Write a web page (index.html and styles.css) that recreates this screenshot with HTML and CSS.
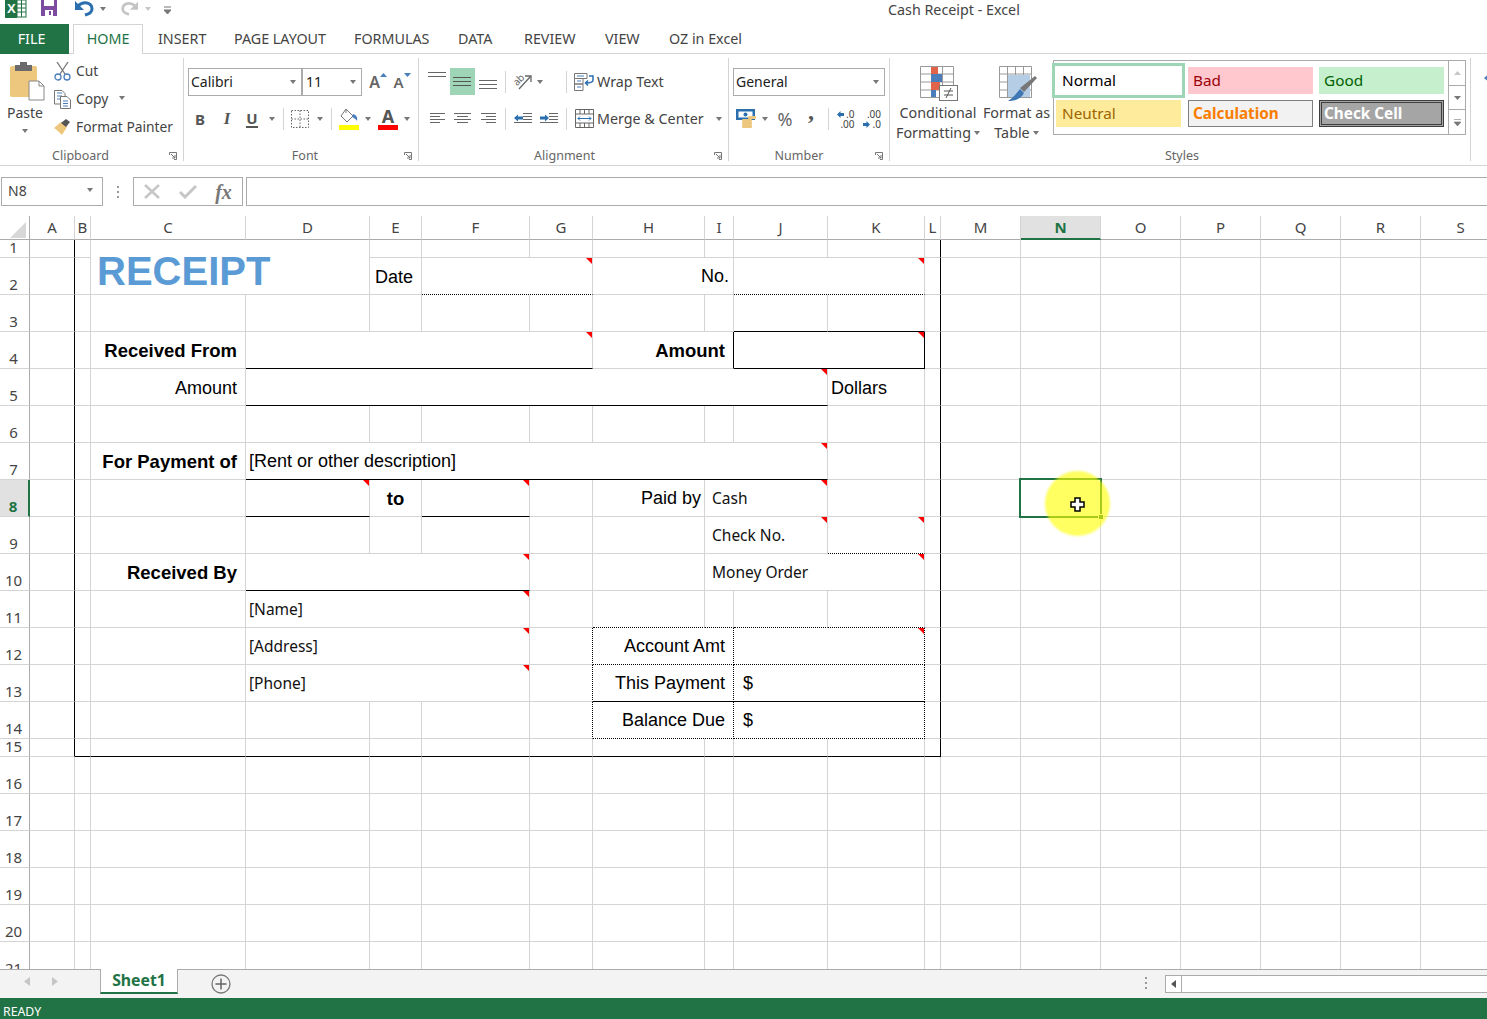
FILE: index.html
```html
<!DOCTYPE html>
<html lang="en">
<head>
    <meta charset="UTF-8">
    <meta name="viewport" content="width=device-width, initial-scale=1.0">
    <title>Cash Receipt - Excel</title>
    <link rel="stylesheet" href="styles.css">
</head>
<body>
    <div id="titlebar">
        <div class="qat">
            <svg class="q-excel" width="22" height="19" viewBox="0 0 22 19"><rect x="8" y="0" width="13" height="17" fill="#fff" stroke="#217346"/><path d="M12 0V17M16.500 0V17M8 4H21M8 8H21M8 12H21" stroke="#217346" fill="none"/><rect x="0" y="0" width="12" height="18" fill="#217346"/><text x="2" y="13" class="q-x">X</text></svg>
            <svg class="q-save" width="17" height="17" viewBox="0 0 17 17"><rect width="16" height="16" fill="#7d4ba0"/><rect x="3" y="0" width="10" height="6" fill="#fff"/><rect x="4" y="10" width="8" height="6" fill="#fff"/><rect x="8" y="11" width="2" height="4" fill="#7d4ba0"/></svg>
            <svg class="q-undo" width="20" height="17" viewBox="0 0 20 17"><path d="M3 6C8 1 17 2 17 9C17 12 14 14 10 15" fill="none" stroke="#2b6fae" stroke-width="3"/><path d="M0 1V10H9Z" fill="#2b6fae"/></svg>
            <i class="caret q-c1"></i>
            <svg class="q-redo" width="18" height="17" viewBox="0 0 20 17"><path d="M17 6C12 1 3 2 3 9C3 12 6 14 10 15" fill="none" stroke="#c4c4c4" stroke-width="3"/><path d="M20 1V10H11Z" fill="#c4c4c4"/></svg>
            <i class="caret q-c2"></i>
            <svg class="q-more" width="7" height="8" viewBox="0 0 7 8"><path d="M0 1H7M0 4H7L3.500 8Z" stroke="#777" fill="#777" stroke-width="1"/></svg>
        </div>
        <div class="doc-title">Cash Receipt - Excel</div>
    </div>

    <div id="tabs">
        <div class="tab-file">FILE</div>
        <div class="tab-home">HOME</div>
        <div class="tab">INSERT</div>
        <div class="tab">PAGE LAYOUT</div>
        <div class="tab">FORMULAS</div>
        <div class="tab">DATA</div>
        <div class="tab">REVIEW</div>
        <div class="tab">VIEW</div>
        <div class="tab">OZ in Excel</div>
    </div>

    <div id="ribbon">
        <!-- clipboard -->
        <div class="group g-clip">
            <div class="g-body clip-body">
                <div class="paste">
                    <svg width="36" height="39" viewBox="0 0 36 39"><rect x="1" y="4" width="27" height="31" rx="2" fill="#eec77e"/><rect x="6" y="3" width="17" height="6" fill="#6b6b6b"/><rect x="11" y="0" width="7" height="4" fill="#6b6b6b"/><path d="M20 19H30L35 24V38H20Z" fill="#fff" stroke="#888"/><path d="M30 19V24H35" fill="none" stroke="#888"/></svg>
                    <span>Paste</span>
                    <i class="caret"></i>
                </div>
                <div class="clip-rows">
                    <div class="clip-row">
                        <svg width="17" height="19" viewBox="0 0 17 19"><path d="M3 0L11 12M14 0L6 12" stroke="#777" stroke-width="1.300" fill="none"/><circle cx="4" cy="15" r="3" fill="none" stroke="#4a7ebb" stroke-width="1.300"/><circle cx="13" cy="15" r="3" fill="none" stroke="#4a7ebb" stroke-width="1.300"/></svg>
                        <span>Cut</span>
                    </div>
                    <div class="clip-row">
                        <svg width="17" height="19" viewBox="0 0 17 19"><path d="M.500.500H8L11 3.500V14H.500Z" fill="#fff" stroke="#777"/><path d="M3 3H8M3 6H8M3 9H8" stroke="#4a7ebb"/><path d="M6.500 6.500H13L16.500 10V18.500H6.500Z" fill="#fff" stroke="#777"/><path d="M9 11H14M9 13.500H14M9 16H14" stroke="#4a7ebb"/></svg>
                        <span>Copy</span>
                        <i class="caret copy-caret"></i>
                    </div>
                    <div class="clip-row">
                        <svg width="17" height="17" viewBox="0 0 17 17"><path d="M0 9L7 3L13 8L8 16C5 13 3 11 0 9Z" fill="#eec77e"/><path d="M7 4L12 0L16 3L12 8Z" fill="#555"/></svg>
                        <span>Format Painter</span>
                    </div>
                </div>
            </div>
            <div class="g-label">Clipboard<svg class="launcher" width="8" height="8" viewBox="0 0 8 8"><path d="M.500 3V.500H7.500V7.500H5M2 2L6 6M3 6H6V3" fill="none" stroke="#777"/></svg></div>
        </div>

        <!-- font -->
        <div class="group g-font">
            <div class="g-body">
                <div class="tool-row font-r1">
                    <div class="combo combo-font">Calibri<i class="caret"></i></div>
                    <div class="combo combo-size">11<i class="caret"></i></div>
                    <div class="grow-a">A<svg width="7" height="4" viewBox="0 0 7 4"><path d="M0 4L3.500 0L7 4Z" fill="#4a7ebb"/></svg></div>
                    <div class="grow-a shrink-a">A<svg width="7" height="4" viewBox="0 0 7 4"><path d="M0 0L3.500 4L7 0Z" fill="#4a7ebb"/></svg></div>
                </div>
                <div class="tool-row font-r2">
                    <b class="fmt">B</b>
                    <i class="fmt fmt-i">I</i>
                    <span class="fmt fmt-u">U</span>
                    <i class="caret"></i>
                    <i class="sep"></i>
                    <svg width="18" height="18" viewBox="0 0 18 18"><path d="M.500.500H17.500V17.500H.500ZM9 .500V17.500M.500 9H17.500" fill="none" stroke="#666" stroke-dasharray="1.500 1.500"/></svg>
                    <i class="caret"></i>
                    <i class="sep"></i>
                    <svg width="20" height="22" viewBox="0 0 20 22"><path d="M7 1L14 8L8 14L2 8Z" fill="#fff" stroke="#777"/><path d="M7 1V5" stroke="#777"/><path d="M14 6C17 7 19 9 18 13C17 11 15 10 13 9Z" fill="#4a7ebb"/><rect y="17" width="20" height="5" fill="#ffff00"/></svg>
                    <i class="caret"></i>
                    <div class="font-color"><span>A</span></div>
                    <i class="caret"></i>
                </div>
            </div>
            <div class="g-label">Font<svg class="launcher" width="8" height="8" viewBox="0 0 8 8"><path d="M.500 3V.500H7.500V7.500H5M2 2L6 6M3 6H6V3" fill="none" stroke="#777"/></svg></div>
        </div>

        <!-- alignment -->
        <div class="group g-align">
            <div class="g-body">
                <div class="tool-row align-r1">
                    <svg width="18" height="9" viewBox="0 0 18 9" class="up-7"><path d="M0 1.500H18M0 5.500H18" stroke="#666"/></svg>
                    <div class="active-btn"><svg width="18" height="10" viewBox="0 0 18 10"><path d="M0 .500H18M0 4.500H18M0 8.500H18" stroke="#555"/></svg></div>
                    <svg width="18" height="10" viewBox="0 0 18 10" class="down-3"><path d="M0 .500H18M0 4.500H18M0 8.500H18" stroke="#666"/></svg>
                    <i class="sep"></i>
                    <svg class="orient" width="19" height="19" viewBox="0 0 19 19"><text x="0" y="11" class="orient-ab" transform="rotate(-45 6 8)">ab</text><path d="M6 17L17 5M12 4H18V10" stroke="#666" fill="none" stroke-width="1.300"/></svg>
                    <i class="caret"></i>
                    <span></span>
                    <i class="sep"></i>
                    <svg width="20" height="18" viewBox="0 0 20 18"><path d="M.500.500H13V5.500H.500ZM.500 5.500H9V11H.500ZM.500 11H9V17.500H.500Z" fill="#fff" stroke="#777"/><path d="M3 3H10M3 8H7M3 14H7" stroke="#4a7ebb"/><path d="M15 3H19V7C19 10 15 10 12 10M14 7.500L11.500 10L14 12.500" fill="none" stroke="#2b6fae" stroke-width="1.500"/></svg>
                    <span class="tool-text">Wrap Text</span>
                </div>
                <div class="tool-row align-r2">
                    <svg width="15" height="11" viewBox="0 0 15 11"><path d="M0 .500H15M0 3.500H10M0 6.500H15M0 9.500H10" stroke="#666"/></svg>
                    <svg width="17" height="11" viewBox="0 0 17 11"><path d="M0 .500H17M3 3.500H14M0 6.500H17M3 9.500H14" stroke="#666"/></svg>
                    <svg width="15" height="11" viewBox="0 0 15 11"><path d="M0 .500H15M5 3.500H15M0 6.500H15M5 9.500H15" stroke="#666"/></svg>
                    <i class="sep"></i>
                    <svg width="18" height="11" viewBox="0 0 18 11"><path d="M9 .500H18M9 3.500H18M9 6.500H18M0 9.500H18" stroke="#666"/><path d="M0 5L4 1.500V3.500H9V6.500H4V8.500Z" fill="#2b6fae"/></svg>
                    <svg width="18" height="11" viewBox="0 0 18 11"><path d="M9 .500H18M9 3.500H18M9 6.500H18M0 9.500H18" stroke="#666"/><path d="M9 5L5 1.500V3.500H0V6.500H5V8.500Z" fill="#2b6fae"/></svg>
                    <i class="sep"></i>
                    <svg width="19" height="19" viewBox="0 0 19 19"><path d="M.500.500H18.500V18.500H.500ZM.500 5H18.500M.500 14H18.500M9.500.500V5M5 5V.500M14 5V.500M9.500 14V18.500M5 14V18.500M14 14V18.500" fill="#fff" stroke="#666"/><path d="M3 9.500H16M5 7.500L3 9.500L5 11.500M14 7.500L16 9.500L14 11.500" fill="none" stroke="#2b6fae"/></svg>
                    <span class="tool-text">Merge &amp; Center</span>
                    <i class="caret"></i>
                </div>
            </div>
            <div class="g-label">Alignment<svg class="launcher" width="8" height="8" viewBox="0 0 8 8"><path d="M.500 3V.500H7.500V7.500H5M2 2L6 6M3 6H6V3" fill="none" stroke="#777"/></svg></div>
        </div>

        <!-- number -->
        <div class="group g-number">
            <div class="g-body">
                <div class="tool-row number-r1">
                    <div class="combo combo-number">General<i class="caret"></i></div>
                </div>
                <div class="tool-row number-r2">
                    <svg width="20" height="19" viewBox="0 0 20 19"><rect x="0" y="0" width="19" height="11" fill="#2b6fae"/><rect x="2.500" y="2.500" width="14" height="6" fill="#fff"/><circle cx="9.500" cy="5.500" r="2" fill="#2b6fae"/><rect x="6" y="10" width="10" height="3" rx="1" fill="#eec77e"/><rect x="6" y="13" width="10" height="3" rx="1" fill="#eec77e"/><rect x="6" y="16" width="10" height="3" rx="1" fill="#eec77e"/><rect x="12" y="7" width="8" height="3" rx="1" fill="#eec77e"/></svg>
                    <i class="caret"></i>
                    <span class="num-sym">%</span>
                    <b class="num-comma">,</b>
                    <i class="sep"></i>
                    <div class="dec-btn"><svg width="7" height="7" viewBox="0 0 7 7"><path d="M0 3.500L3.500 0V2H7V5H3.500V7Z" fill="#2b6fae"/></svg><span class="dec-txt">.0<br>.00</span></div>
                    <div class="dec-btn dec-down"><svg width="7" height="7" viewBox="0 0 7 7"><path d="M7 3.500L3.500 0V2H0V5H3.500V7Z" fill="#2b6fae"/></svg><span class="dec-txt">.00<br>.0</span></div>
                </div>
            </div>
            <div class="g-label">Number<svg class="launcher" width="8" height="8" viewBox="0 0 8 8"><path d="M.500 3V.500H7.500V7.500H5M2 2L6 6M3 6H6V3" fill="none" stroke="#777"/></svg></div>
        </div>

        <!-- styles -->
        <div class="group g-styles">
            <div class="g-body styles-body">
                <div class="big-btn btn-cond">
                    <svg width="38" height="35" viewBox="0 0 38 35"><path d="M.500.500H33.500V31.500H.500ZM11.500.500V31.500M22.500.500V31.500M.500 8H33.500M.500 16H33.500M.500 24H33.500" fill="#fff" stroke="#999"/><rect x="11" y="1" width="7" height="7" fill="#e0644a"/><rect x="11" y="8" width="11" height="8" fill="#4a7ebb"/><rect x="11" y="16" width="9" height="8" fill="#e0644a"/><rect x="11" y="24" width="5" height="7" fill="#4a7ebb"/><rect x="19.500" y="19.500" width="18" height="15" fill="#fff" stroke="#777"/><path d="M24 25H33M24 29H33M31 22L26 32" stroke="#555" fill="none"/></svg>
                    <span>Conditional</span>
                    <span>Formatting<i class="caret"></i></span>
                </div>
                <div class="big-btn btn-table">
                    <svg width="38" height="35" viewBox="0 0 38 35"><path d="M.500.500H32.500V31.500H.500ZM8.500.500V31.500M16.500.500V31.500M24.500.500V31.500M.500 8H32.500M.500 16H32.500M.500 24H32.500" fill="#fff" stroke="#999"/><rect x="9" y="9" width="22" height="22" fill="#b6cde6"/><path d="M36 10L38 12L25 26L21 22Z" fill="#777"/><path d="M21 23L25 27C22 33 16 35 9 35C14 32 17 28 21 23Z" fill="#3f78b5"/></svg>
                    <span>Format as</span>
                    <span>Table<i class="caret"></i></span>
                </div>
                <div class="gallery">
                    <div class="gallery-cells">
                        <div class="cs cs-normal">Normal</div>
                        <div class="cs cs-bad">Bad</div>
                        <div class="cs cs-good">Good</div>
                        <div class="cs cs-neutral">Neutral</div>
                        <div class="cs cs-calc">Calculation</div>
                        <div class="cs cs-check">Check Cell</div>
                    </div>
                    <div class="gallery-scroll">
                        <div><svg width="7" height="4" viewBox="0 0 7 4"><path d="M0 4L3.500 0L7 4Z" fill="#c6c6c6"/></svg></div>
                        <div><svg width="7" height="4" viewBox="0 0 7 4"><path d="M0 0L3.500 4L7 0Z" fill="#777"/></svg></div>
                        <div><svg width="7" height="7" viewBox="0 0 7 7"><path d="M0 .500H7M0 3H7L3.500 7Z" fill="#777" stroke="#777" stroke-width=".6"/></svg></div>
                    </div>
                </div>
            </div>
            <div class="g-label">Styles</div>
        </div>

        <div class="cells-peek">
            <svg width="6" height="10" viewBox="0 0 6 10"><path d="M6 0V10L0 5Z" fill="#4a7ebb"/></svg>
        </div>
    </div>

    <div id="formulabar">
        <div class="namebox">N8<i class="caret"></i></div>
        <div class="fb-dots"><i></i><i></i><i></i></div>
        <div class="fb-btns">
            <svg width="16" height="15" viewBox="0 0 16 15"><path d="M1 1L15 14M15 1L1 14" stroke="#c6c6c6" stroke-width="2.500"/></svg>
            <svg width="18" height="15" viewBox="0 0 18 15"><path d="M1 8L6 13L17 2" fill="none" stroke="#c6c6c6" stroke-width="3"/></svg>
            <span class="fx">fx</span>
        </div>
        <div class="fb-input"></div>
    </div>

    <div id="sheet">
        <table class="cells">
            <colgroup>
                <col class="c-hd"><col class="c-a"><col class="c-b"><col class="c-c"><col class="c-d"><col class="c-e"><col class="c-f"><col class="c-g"><col class="c-h"><col class="c-i"><col class="c-j"><col class="c-k"><col class="c-l"><col class="c-x"><col class="c-x"><col class="c-x"><col class="c-x"><col class="c-x"><col class="c-x"><col class="c-x">
            </colgroup>
            <tr class="col-heads">
                <th class="corner"><i></i></th><th>A</th><th>B</th><th>C</th><th>D</th><th>E</th><th>F</th><th>G</th><th>H</th><th>I</th><th>J</th><th>K</th><th>L</th><th>M</th><th class="sel-col">N</th><th>O</th><th>P</th><th>Q</th><th>R</th><th>S</th>
            </tr>
            <tr class="thin">
                <th>1</th><td class="rk"></td><td></td><td colspan="2" rowspan="2" class="title">RECEIPT</td><td></td><td></td><td></td><td></td><td></td><td></td><td></td><td class="rk"></td><td></td><td></td><td></td><td></td><td></td><td></td><td></td>
            </tr>
            <tr>
                <th>2</th><td class="rk"></td><td></td><td class="ctr date">Date</td><td colspan="2" class="bd note"></td><td colspan="2" class="rgt">No.</td><td colspan="2" class="bd note"></td><td class="rk"></td><td></td><td></td><td></td><td></td><td></td><td></td><td></td>
            </tr>
            <tr>
                <th>3</th><td class="rk"></td><td></td><td></td><td></td><td></td><td></td><td></td><td></td><td></td><td class="bk"></td><td class="bk"></td><td class="rk"></td><td></td><td></td><td></td><td></td><td></td><td></td><td></td>
            </tr>
            <tr>
                <th>4</th><td class="rk"></td><td></td><td class="lbl">Received From</td><td colspan="4" class="bk note"></td><td colspan="2" class="lbl rk">Amount</td><td colspan="2" class="bk rk note"></td><td class="rk"></td><td></td><td></td><td></td><td></td><td></td><td></td><td></td>
            </tr>
            <tr>
                <th>5</th><td class="rk"></td><td></td><td class="ind lower">Amount</td><td colspan="7" class="bk note"></td><td class="lft lower">Dollars</td><td class="rk"></td><td></td><td></td><td></td><td></td><td></td><td></td><td></td>
            </tr>
            <tr>
                <th>6</th><td class="rk"></td><td></td><td></td><td></td><td></td><td></td><td></td><td></td><td></td><td></td><td></td><td class="rk"></td><td></td><td></td><td></td><td></td><td></td><td></td><td></td>
            </tr>
            <tr>
                <th>7</th><td class="rk"></td><td></td><td class="lbl">For Payment of</td><td colspan="7" class="bk note lft">[Rent or other description]</td><td></td><td class="rk"></td><td></td><td></td><td></td><td></td><td></td><td></td><td></td>
            </tr>
            <tr>
                <th class="sel-row">8</th><td class="rk"></td><td></td><td></td><td class="bk note"></td><td class="ctr strong">to</td><td class="bk note"></td><td></td><td class="rgt tight">Paid by</td><td colspan="2" class="note cal">Cash</td><td></td><td class="rk"></td><td></td><td></td><td></td><td></td><td></td><td></td><td></td>
            </tr>
            <tr>
                <th>9</th><td class="rk"></td><td></td><td></td><td></td><td></td><td></td><td></td><td></td><td colspan="2" class="note cal">Check No.</td><td class="bd note"></td><td class="rk"></td><td></td><td></td><td></td><td></td><td></td><td></td><td></td>
            </tr>
            <tr>
                <th>10</th><td class="rk"></td><td></td><td class="lbl">Received By</td><td colspan="3" class="bk note"></td><td></td><td></td><td colspan="3" class="note cal">Money Order</td><td class="rk"></td><td></td><td></td><td></td><td></td><td></td><td></td><td></td>
            </tr>
            <tr>
                <th>11</th><td class="rk"></td><td></td><td></td><td colspan="3" class="note cal2">[Name]</td><td></td><td class="bd"></td><td class="bd"></td><td class="bd"></td><td class="bd"></td><td class="rk"></td><td></td><td></td><td></td><td></td><td></td><td></td><td></td>
            </tr>
            <tr>
                <th>12</th><td class="rk"></td><td></td><td></td><td colspan="3" class="note cal2">[Address]</td><td class="rd"></td><td colspan="2" class="ind bd rd">Account Amt</td><td colspan="2" class="bd rd note"></td><td class="rk"></td><td></td><td></td><td></td><td></td><td></td><td></td><td></td>
            </tr>
            <tr>
                <th>13</th><td class="rk"></td><td></td><td></td><td colspan="3" class="note cal2">[Phone]</td><td class="rd"></td><td colspan="2" class="ind bk rd">This Payment</td><td colspan="2" class="bk rd money">$</td><td class="rk"></td><td></td><td></td><td></td><td></td><td></td><td></td><td></td>
            </tr>
            <tr>
                <th>14</th><td class="rk"></td><td></td><td></td><td></td><td></td><td></td><td class="rd"></td><td colspan="2" class="ind bd rd">Balance Due</td><td colspan="2" class="bd rd money">$</td><td class="rk"></td><td></td><td></td><td></td><td></td><td></td><td></td><td></td>
            </tr>
            <tr class="thin">
                <th>15</th><td class="rk"></td><td class="bk"></td><td class="bk"></td><td class="bk"></td><td class="bk"></td><td class="bk"></td><td class="bk"></td><td class="bk"></td><td class="bk"></td><td class="bk"></td><td class="bk"></td><td class="bk rk"></td><td></td><td></td><td></td><td></td><td></td><td></td><td></td>
            </tr>
            <tr>
                <th>16</th><td></td><td></td><td></td><td></td><td></td><td></td><td></td><td></td><td></td><td></td><td></td><td></td><td></td><td></td><td></td><td></td><td></td><td></td><td></td>
            </tr>
            <tr>
                <th>17</th><td></td><td></td><td></td><td></td><td></td><td></td><td></td><td></td><td></td><td></td><td></td><td></td><td></td><td></td><td></td><td></td><td></td><td></td><td></td>
            </tr>
            <tr>
                <th>18</th><td></td><td></td><td></td><td></td><td></td><td></td><td></td><td></td><td></td><td></td><td></td><td></td><td></td><td></td><td></td><td></td><td></td><td></td><td></td>
            </tr>
            <tr>
                <th>19</th><td></td><td></td><td></td><td></td><td></td><td></td><td></td><td></td><td></td><td></td><td></td><td></td><td></td><td></td><td></td><td></td><td></td><td></td><td></td>
            </tr>
            <tr>
                <th>20</th><td></td><td></td><td></td><td></td><td></td><td></td><td></td><td></td><td></td><td></td><td></td><td></td><td></td><td></td><td></td><td></td><td></td><td></td><td></td>
            </tr>
            <tr>
                <th>21</th><td></td><td></td><td></td><td></td><td></td><td></td><td></td><td></td><td></td><td></td><td></td><td></td><td></td><td></td><td></td><td></td><td></td><td></td><td></td>
            </tr>
        </table>

        <div class="selection"><i class="handle"></i></div>
        <div class="spot"></div>
        <svg class="pointer" width="15" height="15" viewBox="0 0 15 15"><path d="M5 1H10V5H14V10H10V14H5V10H1V5H5Z" fill="#fff" stroke="#000" stroke-width="1.500"/></svg>
    </div>

    <div id="sheetbar">
        <div class="sheet-nav">
            <svg width="6" height="9" viewBox="0 0 6 9"><path d="M6 0V9L0 4.500Z" fill="#c6c6c6"/></svg>
            <svg width="6" height="9" viewBox="0 0 6 9"><path d="M0 0V9L6 4.500Z" fill="#c6c6c6"/></svg>
        </div>
        <div class="sheet-tab">Sheet1</div>
        <svg class="sheet-add" width="20" height="20" viewBox="0 0 20 20"><circle cx="10" cy="10" r="9" fill="none" stroke="#777" stroke-width="1.300"/><path d="M10 4.500V15.500M4.500 10H15.500" stroke="#666" stroke-width="1.500"/></svg>
        <div class="sb-dots"><i></i><i></i><i></i></div>
        <div class="hscroll">
            <div class="hscroll-btn"><svg width="5" height="8" viewBox="0 0 5 8"><path d="M5 0V8L0 4Z" fill="#555"/></svg></div>
        </div>
    </div>

    <div id="statusbar">READY</div>
</body>
</html>
```

FILE: styles.css
```css
* {
    box-sizing: border-box;
}
html, body {
    margin: 0;
    height: 1019px;
    overflow: hidden;
}
body {
    width: 1487px;
    background-color: #fff;
    font-family: "Noto Sans", "Open Sans", sans-serif;
    font-size: 14px;
    color: #444;
}
i {
    font-style: normal;
}
svg {
    display: block;
    flex: none;
}
.caret {
    display: block;
    width: 0;
    height: 0;
    border-left: 3.5px solid transparent;
    border-right: 3.5px solid transparent;
    border-top: 4px solid #777;
}

/* title bar */
#titlebar {
    height: 24px;
    display: flex;
    overflow: hidden;
}
.qat {
    width: 180px;
    height: 24px;
    position: relative;
    display: flex;
    align-items: flex-start;
}
.q-excel { margin-left: 5px; }
.q-x { font: bold 13px "Liberation Sans", sans-serif; fill: #fff; }
.q-save { margin-left: 14px; }
.q-undo { margin-left: 17px; margin-top: 0; }
.q-c1 { margin-left: 5px; margin-top: 7px; }
.q-redo { margin-left: 14px; margin-top: 0; }
.q-c2 { margin-left: 7px; margin-top: 7px; border-top-color: #c6c6c6; }
.q-more { margin-left: 13px; margin-top: 6px; }
.doc-title {
    margin-left: 708px;
    font-size: 14.3px;
    line-height: 20px;
    color: #444;
    white-space: nowrap;
}

/* tabs */
#tabs {
    height: 30px;
    display: grid;
    grid-template-columns: 69px 4px 70px 15px 76px 120px 104px 66px 81px 64px auto;
    border-bottom: 1px solid #d4d4d4;
    font-size: 14.3px;
}
.tab-file {
    background-color: #217346;
    color: #fff;
    padding-right: 6px;
    text-align: center;
    line-height: 29px;
}
.tab-home {
    grid-column: 3;
    height: 30px;
    background-color: #fff;
    border: 1px solid #d4d4d4;
    border-bottom: none;
    color: #217346;
    text-align: center;
    line-height: 28px;
}
.tab {
    line-height: 29px;
    white-space: nowrap;
}
.tab-home + .tab { grid-column: 5; }

/* ribbon */
#ribbon {
    height: 112px;
    display: flex;
    padding-top: 4px;
    border-bottom: 1px solid #d4d4d4;
}
.group {
    height: 103px;
    border-right: 1px solid #d4d4d4;
    flex: none;
}
.g-clip { width: 184px; }
.g-font { width: 235px; }
.g-align { width: 310px; }
.g-number { width: 161px; }
.g-styles { width: 581px; }
.g-body {
    height: 90px;
    padding-top: 5px;
}
.g-label {
    position: relative;
    height: 13px;
    font-size: 12.5px;
    line-height: 16px;
    text-align: center;
    color: #666;
}
.g-clip .g-label { padding-right: 22px; }
.g-font .g-label { padding-left: 8px; }
.g-align .g-label { padding-right: 18px; }
.g-number .g-label { padding-right: 20px; }
.g-styles .g-label { padding-left: 4px; }
.launcher {
    position: absolute;
    right: 6px;
    top: 4px;
}
.tool-row {
    height: 37px;
    display: grid;
    align-items: center;
    justify-items: center;
}
.tool-text {
    justify-self: start;
    margin-left: -1px;
    white-space: nowrap;
    font-size: 14.3px;
}
.sep {
    display: block;
    width: 1px;
    height: 22px;
    background-color: #d4d4d4;
}
.combo {
    position: relative;
    height: 28px;
    border: 1px solid #ababab;
    line-height: 26px;
    padding-left: 2px;
    color: #222;
    white-space: nowrap;
}
.combo .caret {
    position: absolute;
    right: 5px;
    top: 11px;
}

/* clipboard */
.clip-body {
    display: flex;
    padding-top: 0;
}
.paste {
    width: 50px;
    padding-top: 4px;
    display: flex;
    flex-direction: column;
    align-items: center;
}
.paste svg { margin-left: 3px; }
.paste span { line-height: 20px; margin-top: 2px; }
.paste .caret { margin-top: 6px; }
.clip-rows { margin-top: -1px; }
.clip-row {
    height: 28px;
    display: flex;
    align-items: center;
    gap: 5px;
    margin-left: 4px;
    font-size: 13.8px;
}
.clip-row span { margin-top: -2px; }
.copy-caret { margin-left: 6px; margin-top: -2px; }

/* font */
.font-r1 {
    grid-template-columns: 114px 60px 24px 24px;
    justify-content: start;
    padding-left: 4px;
}
.combo-font, .combo-size { width: 100%; }
.combo-size { padding-left: 3px; }
.grow-a {
    display: flex;
    align-items: flex-start;
    font-size: 16px;
    font-weight: 600;
    color: #666;
    line-height: 20px;
    margin-left: 8px;
}
.grow-a svg { margin-top: 1px; }
.shrink-a { font-size: 15px; }
.font-r2 {
    grid-template-columns: 26px 28px 22px 18px 4px 30px 10px 12px 24px 14px 26px 12px;
    justify-content: start;
    padding-left: 3px;
}
.fmt { font-size: 15px; color: #555; }
.fmt-i { font-family: "Liberation Serif", serif; font-size: 17px; font-style: italic; font-weight: bold; }
.fmt-u { font-weight: bold; border-bottom: 2px solid #555; line-height: 16px; }
.font-color span {
    display: block;
    width: 20px;
    height: 22px;
    font-size: 18px;
    font-weight: bold;
    line-height: 17px;
    text-align: center;
    color: #555;
    border-bottom: 5px solid #ff0000;
}

/* alignment */
.align-r1 {
    grid-template-columns: 24px 26px 26px 8px 26px 10px 17px 8px 28px 70px;
    justify-content: start;
    padding-left: 6px;
}
.align-r2 {
    grid-template-columns: 24px 26px 26px 8px 27px 26px 8px 28px 116px 10px;
    justify-content: start;
    padding-left: 6px;
}
.active-btn {
    width: 25px;
    height: 27px;
    display: flex;
    align-items: center;
    justify-content: center;
    background-color: #9fd5b7;
}
.up-7 { margin-bottom: 13px; }
.down-3 { margin-top: 7px; }
.orient { overflow: visible; }
.orient-ab { font: 10px "Noto Sans", sans-serif; fill: #666; }

/* number */
.number-r1 {
    grid-template-columns: 152px;
    padding-left: 4px;
    justify-content: start;
}
.combo-number { width: 100%; }
.number-r2 {
    grid-template-columns: 25px 14px 26px 26px 8px 27px 26px;
    justify-content: start;
    padding-left: 4px;
}
.num-sym { font-size: 18px; color: #666; }
.num-comma { font-family: "Liberation Serif", serif; font-size: 24px; color: #555; line-height: 22px; margin-top: -15px; }
.dec-btn {
    position: relative;
    width: 18px;
    height: 20px;
    font-size: 10px;
    line-height: 10px;
    color: #444;
}
.dec-btn svg { position: absolute; left: 0; top: 2px; }
.dec-txt { display: block; text-align: right; }
.dec-down svg { top: 12px; }

/* styles */
.styles-body {
    display: flex;
    padding-top: 0;
}
.big-btn {
    display: flex;
    flex-direction: column;
    align-items: center;
    padding-top: 8px;
    font-size: 14.3px;
    line-height: 20px;
    white-space: nowrap;
}
.big-btn svg { margin-bottom: 2px; }
.big-btn span { display: flex; align-items: center; gap: 3px; }
.btn-cond { width: 92px; margin-left: 2px; }
.btn-cond svg { margin-left: 2px; }
.btn-table { width: 69px; margin-left: -2px; }
.btn-table svg { margin-left: 3px; }
.gallery {
    width: 413px;
    height: 75px;
    margin: 2px 0 0 2px;
    display: flex;
    border: 1px solid #ababab;
}
.gallery-cells {
    width: 394px;
    padding: 6px 0 0 2px;
    display: grid;
    grid-template-columns: 132px 131px 125px;
    grid-auto-rows: 27px;
    row-gap: 6px;
}
.cs {
    width: 125px;
    height: 27px;
    padding-left: 6px;
    font-size: 15.3px;
    line-height: 26px;
    white-space: nowrap;
}
.cs-normal { outline: 3px solid #9fd5b7; outline-offset: 1px; color: #000; }
.cs-bad { background-color: #ffc7ce; color: #9c0006; padding-left: 5px; }
.cs-good { background-color: #c6efce; color: #006100; padding-left: 5px; }
.cs-neutral { background-color: #ffeb9c; color: #9c6500; }
.cs-calc { background-color: #f2f2f2; border: 1px solid #7f7f7f; color: #fa7d00; font-weight: bold; padding-left: 4px; line-height: 25px; }
.cs-check { background-color: #a5a5a5; border: 3px double #3f3f3f; color: #fff; font-weight: bold; padding-left: 2px; line-height: 20px; }
.gallery-scroll {
    width: 17px;
    display: flex;
    flex-direction: column;
    border-left: 1px solid #ababab;
}
.gallery-scroll div {
    flex: 1;
    display: flex;
    align-items: center;
    justify-content: center;
    border-bottom: 1px solid #ababab;
}
.gallery-scroll div:last-child { border-bottom: none; }
.cells-peek {
    padding: 15px 0 0 13px;
}

/* formula bar */
#formulabar {
    height: 50px;
    padding-top: 11px;
    display: flex;
    align-items: flex-start;
}
.namebox {
    position: relative;
    width: 102px;
    height: 29px;
    margin-left: 1px;
    border: 1px solid #ababab;
    line-height: 26px;
    padding-left: 6px;
    color: #444;
}
.namebox .caret { position: absolute; right: 9px; top: 10px; }
.fb-dots {
    width: 30px;
    height: 29px;
    display: flex;
    flex-direction: column;
    align-items: center;
    justify-content: center;
    gap: 3px;
}
.fb-dots i, .sb-dots i {
    display: block;
    width: 2px;
    height: 2px;
    background-color: #999;
}
.fb-btns {
    width: 110px;
    height: 29px;
    display: grid;
    grid-template-columns: 35px 37px 35px;
    align-items: center;
    justify-items: center;
    border: 1px solid #ababab;
}
.fx {
    font-family: "Liberation Serif", serif;
    font-size: 20px;
    font-style: italic;
    font-weight: bold;
    line-height: 20px;
    color: #777;
}
.fb-input {
    flex: 1;
    height: 29px;
    margin-left: 3px;
    border: 1px solid #ababab;
    border-right: none;
}

/* sheet */
#sheet {
    position: relative;
    height: 753px;
    overflow: hidden;
}
.cells {
    width: 1501px;
    table-layout: fixed;
    border-collapse: separate;
    border-spacing: 0;
}
.c-hd { width: 30px; }
.c-a { width: 45px; }
.c-b { width: 16px; }
.c-c { width: 155px; }
.c-d { width: 124px; }
.c-e { width: 52px; }
.c-f { width: 108px; }
.c-g { width: 63px; }
.c-h { width: 112px; }
.c-i { width: 29px; }
.c-j { width: 94px; }
.c-k { width: 97px; }
.c-l { width: 16px; }
.c-x { width: 80px; }
.cells tr { height: 37px; }
.cells tr.thin { height: 18px; }
.cells tr.col-heads { height: 24px; }
.cells th {
    padding: 0 2px 3px 0;
    font-weight: normal;
    font-size: 15px;
    color: #444;
    border-right: 1px solid #ababab;
    border-bottom: 1px solid #d4d4d4;
    vertical-align: bottom;
    text-align: center;
    line-height: 14px;
}
.cells td {
    position: relative;
    padding: 1px 0 0;
    border-right: 1px solid #d4d4d4;
    border-bottom: 1px solid #d4d4d4;
    font-family: "Liberation Sans", Arial, sans-serif;
    font-size: 18px;
    color: #000;
    white-space: nowrap;
    vertical-align: middle;
}
.cells .col-heads th {
    padding: 0;
    border-right: 1px solid #d4d4d4;
    border-bottom: 1px solid #ababab;
    vertical-align: middle;
    line-height: 21px;
}
.cells .col-heads .corner { border-right: 1px solid #ababab; position: relative; }
.corner i {
    position: absolute;
    left: 10px;
    top: 6px;
    width: 16px;
    height: 16px;
    background-color: #d8d8d8;
    clip-path: polygon(100% 0, 100% 100%, 0 100%);
}
.cells .col-heads .sel-col {
    background-color: #e1e1e1;
    color: #217346;
    font-weight: bold;
    border-bottom: 2px solid #217346;
}
.cells .sel-row {
    background-color: #e1e1e1;
    color: #217346;
    font-weight: bold;
    border-right: 2px solid #217346;
}
.cells .title {
    padding: 8px 0 0 6px;
    font-size: 40px;
    font-weight: bold;
    line-height: 44px;
    color: #5b9bd5;
    vertical-align: middle;
}
.cells .lbl {
    padding-right: 8px;
    text-align: right;
    font-size: 18.5px;
    font-weight: bold;
}
.cells .ind { padding-right: 8px; text-align: right; }
.cells .rgt { padding-right: 4px; text-align: right; }
.cells .tight { padding-right: 3px; }
.cells .lft { padding-left: 3px; }
.cells .lower { padding-top: 3px; }
.cells .ctr { text-align: center; }
.cells .date { padding: 3px 3px 0 0; }
.cells .strong { font-size: 18.5px; font-weight: bold; }
.cells .money { padding-left: 9px; }
.cells .cal, .cells .cal2 {
    padding-top: 0;
    font-family: "Noto Sans", "Open Sans", sans-serif;
    font-size: 15.5px;
    color: #111;
}
.cells .cal { padding-left: 7px; }
.cells .cal2 { padding-left: 3px; }
.cells .bk { border-bottom-color: #000; }
.cells .bd { border-bottom: 1px dotted #000; }
.cells .rk { border-right-color: #000; }
.cells .rd { border-right: 1px dotted #000; }
.note::after {
    content: "";
    position: absolute;
    top: 0;
    right: 0;
    width: 6px;
    height: 6px;
    background-color: #ff0000;
    clip-path: polygon(0 0, 100% 0, 100% 100%);
}

/* active cell and the recorded pointer highlight */
.selection {
    position: absolute;
    left: 1019px;
    top: 262px;
    width: 83px;
    height: 40px;
    border: 2px solid #217346;
}
.handle {
    position: absolute;
    right: -4px;
    bottom: -4px;
    width: 6px;
    height: 6px;
    background-color: #217346;
    border: 1px solid #fff;
}
.spot {
    position: absolute;
    left: 1045px;
    top: 255px;
    width: 65px;
    height: 65px;
    border-radius: 50%;
    background-color: rgba(255, 255, 0, 0.62);
    filter: blur(1px);
}
.pointer {
    position: absolute;
    left: 1070px;
    top: 281px;
}

/* sheet tabs */
#sheetbar {
    height: 29px;
    display: flex;
    align-items: flex-start;
    background-color: #f3f3f3;
    border-top: 1px solid #ababab;
}
.sheet-nav {
    width: 100px;
    height: 28px;
    padding: 0 0 6px 24px;
    display: flex;
    align-items: center;
    gap: 22px;
}
.sheet-tab {
    width: 78px;
    height: 25px;
    margin-top: -1px;
    background-color: #fff;
    border-left: 1px solid #ababab;
    border-right: 1px solid #ababab;
    border-bottom: 2px solid #217346;
    font-size: 15.8px;
    font-weight: bold;
    line-height: 22px;
    text-align: center;
    color: #217346;
}
.sheet-add { margin: 4px 0 0 33px; }
.sb-dots {
    width: 6px;
    height: 28px;
    margin-left: 912px;
    padding-bottom: 2px;
    display: flex;
    flex-direction: column;
    align-items: center;
    justify-content: center;
    gap: 3px;
}
.hscroll {
    width: 322px;
    height: 18px;
    margin: 5px 0 0 16px;
    background-color: #fff;
    border: 1px solid #ababab;
    border-right: none;
}
.hscroll-btn {
    width: 16px;
    height: 16px;
    display: flex;
    align-items: center;
    justify-content: center;
    border-right: 1px solid #ababab;
}

/* status bar */
#statusbar {
    height: 21px;
    padding-left: 3px;
    background-color: #217346;
    color: #fff;
    font-size: 12.3px;
    line-height: 27px;
    overflow: hidden;
}
```
